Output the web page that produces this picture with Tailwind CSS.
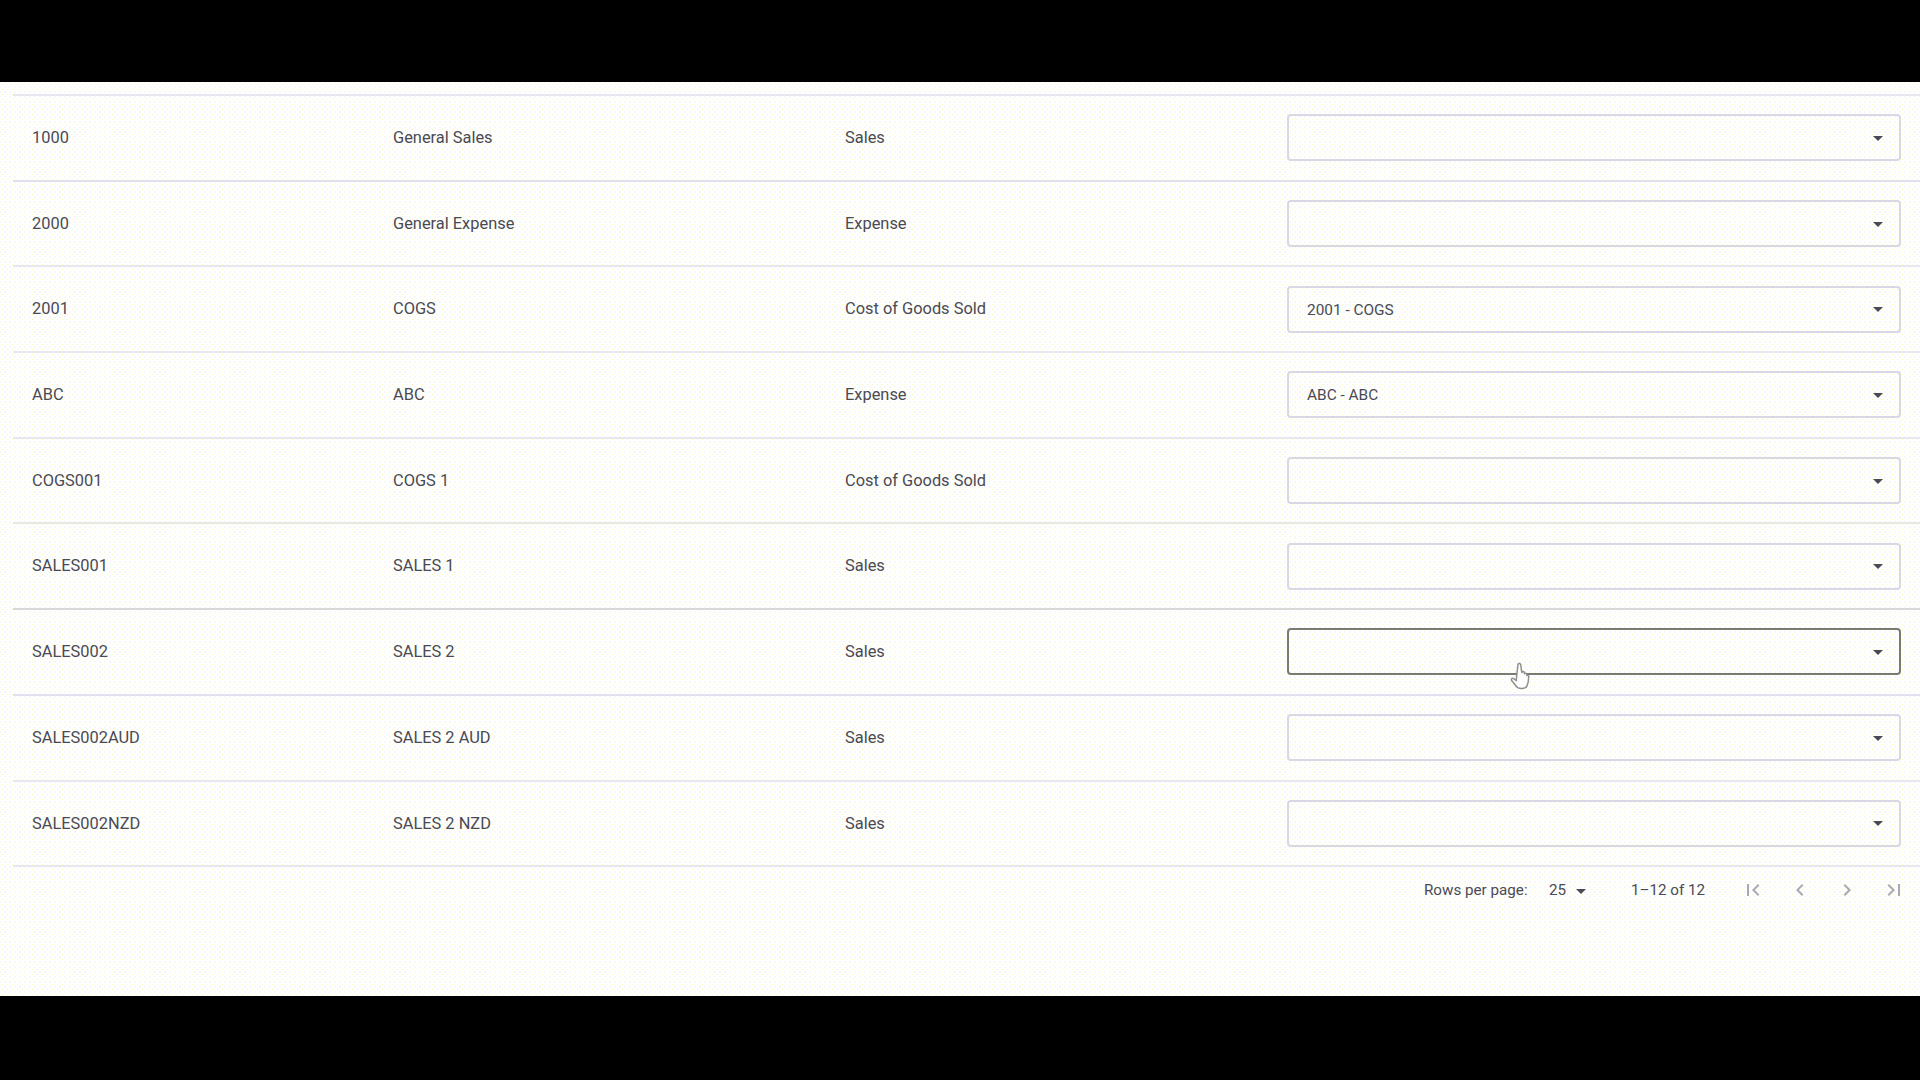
<!DOCTYPE html>
<html lang="en">
<head>
  <meta charset="utf-8">
  <title>Account mapping</title>
  <script src="https://cdn.jsdelivr.net/npm/@tailwindcss/browser@4"></script>
</head>
<body class="h-[1080px] w-[1920px] overflow-hidden bg-black font-['Roboto',sans-serif] text-[16.4px] text-[#4a4a55]">
  <div class="h-[82px] bg-black"></div>
  <main class="h-[914px] bg-[#fffffd] bg-[radial-gradient(circle,#f8f8b4_0.6px,transparent_0.8px),radial-gradient(circle,#e0e0f6_0.6px,transparent_0.8px)] bg-size-[5px_5px] bg-[position:0_0,2.5px_2.5px] pt-[12px]">
    <div class="ml-[13px] border-t-2 border-[#e7e7f0]">

      <div class="grid h-[85.7px] grid-cols-[361px_452px_442px_614px] items-center border-b-2 border-[#e0e0ee] pl-[19px] [&>div:not(:last-child)]:pt-[1px]">
        <div>1000</div><div>General Sales</div><div>Sales</div>
        <div class="relative flex h-[47px] items-center rounded-[4px] border-2 border-[#d8d8e4] pl-[18px] text-[15.400px]">
          <svg class="absolute right-[9px] h-[24px] w-[24px] fill-[#4a4a55]" viewBox="0 0 24 24"><path d="M7 10l5 5 5-5z"/></svg>
        </div>
      </div>

      <div class="grid h-[85.7px] grid-cols-[361px_452px_442px_614px] items-center border-b-2 border-[#e7e7f0] pl-[19px] [&>div:not(:last-child)]:pt-[1px]">
        <div>2000</div><div>General Expense</div><div>Expense</div>
        <div class="relative flex h-[47px] items-center rounded-[4px] border-2 border-[#d8d8e4] pl-[18px] text-[15.400px]">
          <svg class="absolute right-[9px] h-[24px] w-[24px] fill-[#4a4a55]" viewBox="0 0 24 24"><path d="M7 10l5 5 5-5z"/></svg>
        </div>
      </div>

      <div class="grid h-[85.7px] grid-cols-[361px_452px_442px_614px] items-center border-b-2 border-[#e7e7f0] pl-[19px] [&>div:not(:last-child)]:pt-[1px]">
        <div>2001</div><div>COGS</div><div>Cost of Goods Sold</div>
        <div class="relative flex h-[47px] items-center rounded-[4px] border-2 border-[#d8d8e4] pl-[18px] text-[15.400px]">
          <span class="pt-[2px]">2001 - COGS</span>
          <svg class="absolute right-[9px] h-[24px] w-[24px] fill-[#4a4a55]" viewBox="0 0 24 24"><path d="M7 10l5 5 5-5z"/></svg>
        </div>
      </div>

      <div class="grid h-[85.7px] grid-cols-[361px_452px_442px_614px] items-center border-b-2 border-[#e7e7f0] pl-[19px] [&>div:not(:last-child)]:pt-[1px]">
        <div>ABC</div><div>ABC</div><div>Expense</div>
        <div class="relative flex h-[47px] items-center rounded-[4px] border-2 border-[#d8d8e4] pl-[18px] text-[15.400px]">
          <span class="pt-[2px]">ABC - ABC</span>
          <svg class="absolute right-[9px] h-[24px] w-[24px] fill-[#4a4a55]" viewBox="0 0 24 24"><path d="M7 10l5 5 5-5z"/></svg>
        </div>
      </div>

      <div class="grid h-[85.7px] grid-cols-[361px_452px_442px_614px] items-center border-b-2 border-[#e7e7e4] pl-[19px] [&>div:not(:last-child)]:pt-[1px]">
        <div>COGS001</div><div>COGS 1</div><div>Cost of Goods Sold</div>
        <div class="relative flex h-[47px] items-center rounded-[4px] border-2 border-[#d8d8e4] pl-[18px] text-[15.400px]">
          <svg class="absolute right-[9px] h-[24px] w-[24px] fill-[#4a4a55]" viewBox="0 0 24 24"><path d="M7 10l5 5 5-5z"/></svg>
        </div>
      </div>

      <div class="grid h-[85.7px] grid-cols-[361px_452px_442px_614px] items-center border-b-2 border-[#d8d8d8] pl-[19px] [&>div:not(:last-child)]:pt-[1px]">
        <div>SALES001</div><div>SALES 1</div><div>Sales</div>
        <div class="relative flex h-[47px] items-center rounded-[4px] border-2 border-[#d8d8e4] pl-[18px] text-[15.400px]">
          <svg class="absolute right-[9px] h-[24px] w-[24px] fill-[#4a4a55]" viewBox="0 0 24 24"><path d="M7 10l5 5 5-5z"/></svg>
        </div>
      </div>

      <div class="grid h-[85.7px] grid-cols-[361px_452px_442px_614px] items-center border-b-2 border-[#e0e0ee] pl-[19px] [&>div:not(:last-child)]:pt-[1px]">
        <div>SALES002</div><div>SALES 2</div><div>Sales</div>
        <div class="relative flex h-[47px] items-center rounded-[4px] border-2 border-[#7a7a70] pl-[18px] text-[15.400px]">
          <svg class="absolute right-[9px] h-[24px] w-[24px] fill-[#4a4a55]" viewBox="0 0 24 24"><path d="M7 10l5 5 5-5z"/></svg>
          <!-- hand cursor over the hovered select -->
          <svg class="absolute left-[221px] top-[32px] h-[28px] w-[22px] fill-white stroke-[#8f8f8f] stroke-[1.5]" viewBox="0 0 22 28"><path d="M8 2c1-1 2.500-.5 2.800 1l1 8 .2-1c1-.8 2-.5 2.300.6l.2 1c1-.7 2-.3 2.200.8l.2 1c1-.5 1.800 0 1.800 1.200 0 4-.5 7-2 10-2 2-6 2.500-9 1-2.500-2-4-5-6-7-.7-1.200 0-2.500 1.500-2.200l3 2z"/></svg>
        </div>
      </div>

      <div class="grid h-[85.7px] grid-cols-[361px_452px_442px_614px] items-center border-b-2 border-[#e7e7f0] pl-[19px] [&>div:not(:last-child)]:pt-[1px]">
        <div>SALES002AUD</div><div>SALES 2 AUD</div><div>Sales</div>
        <div class="relative flex h-[47px] items-center rounded-[4px] border-2 border-[#d8d8e4] pl-[18px] text-[15.400px]">
          <svg class="absolute right-[9px] h-[24px] w-[24px] fill-[#4a4a55]" viewBox="0 0 24 24"><path d="M7 10l5 5 5-5z"/></svg>
        </div>
      </div>

      <div class="grid h-[85.7px] grid-cols-[361px_452px_442px_614px] items-center border-b-2 border-[#e7e7f0] pl-[19px] [&>div:not(:last-child)]:pt-[1px]">
        <div>SALES002NZD</div><div>SALES 2 NZD</div><div>Sales</div>
        <div class="relative flex h-[47px] items-center rounded-[4px] border-2 border-[#d8d8e4] pl-[18px] text-[15.400px]">
          <svg class="absolute right-[9px] h-[24px] w-[24px] fill-[#4a4a55]" viewBox="0 0 24 24"><path d="M7 10l5 5 5-5z"/></svg>
        </div>
      </div>
    </div>

    <!-- pagination -->
    <div class="flex h-[47px] items-center pl-[1424px] text-[15.200px]">
      <span class="w-[125px]">Rows per page:</span>
      <span class="w-[20px]">25</span>
      <svg class="h-[24px] w-[24px] fill-[#4a4a55]" viewBox="0 0 24 24"><path d="M7 10l5 5 5-5z"/></svg>
      <span class="ml-[38px] w-[110px]">1–12 of 12</span>
      <div class="flex -translate-y-px gap-[23px]">
        <svg class="h-[24px] w-[24px] fill-[#a9a9b4]" viewBox="0 0 24 24"><path d="M18.410 16.590 13.820 12l4.590-4.590L17 6l-6 6 6 6zM6 6h2v12H6z"/></svg>
        <svg class="h-[24px] w-[24px] fill-[#a9a9b4]" viewBox="0 0 24 24"><path d="M15.410 7.410 14 6l-6 6 6 6 1.410-1.410L10.830 12z"/></svg>
        <svg class="h-[24px] w-[24px] fill-[#a9a9b4]" viewBox="0 0 24 24"><path d="M10 6 8.590 7.410 13.170 12l-4.580 4.590L10 18l6-6z"/></svg>
        <svg class="h-[24px] w-[24px] fill-[#a9a9b4]" viewBox="0 0 24 24"><path d="M5.590 7.410 10.180 12l-4.590 4.590L7 18l6-6-6-6zM16 6h2v12h-2z"/></svg>
      </div>
    </div>
  </main>
</body>
</html>
